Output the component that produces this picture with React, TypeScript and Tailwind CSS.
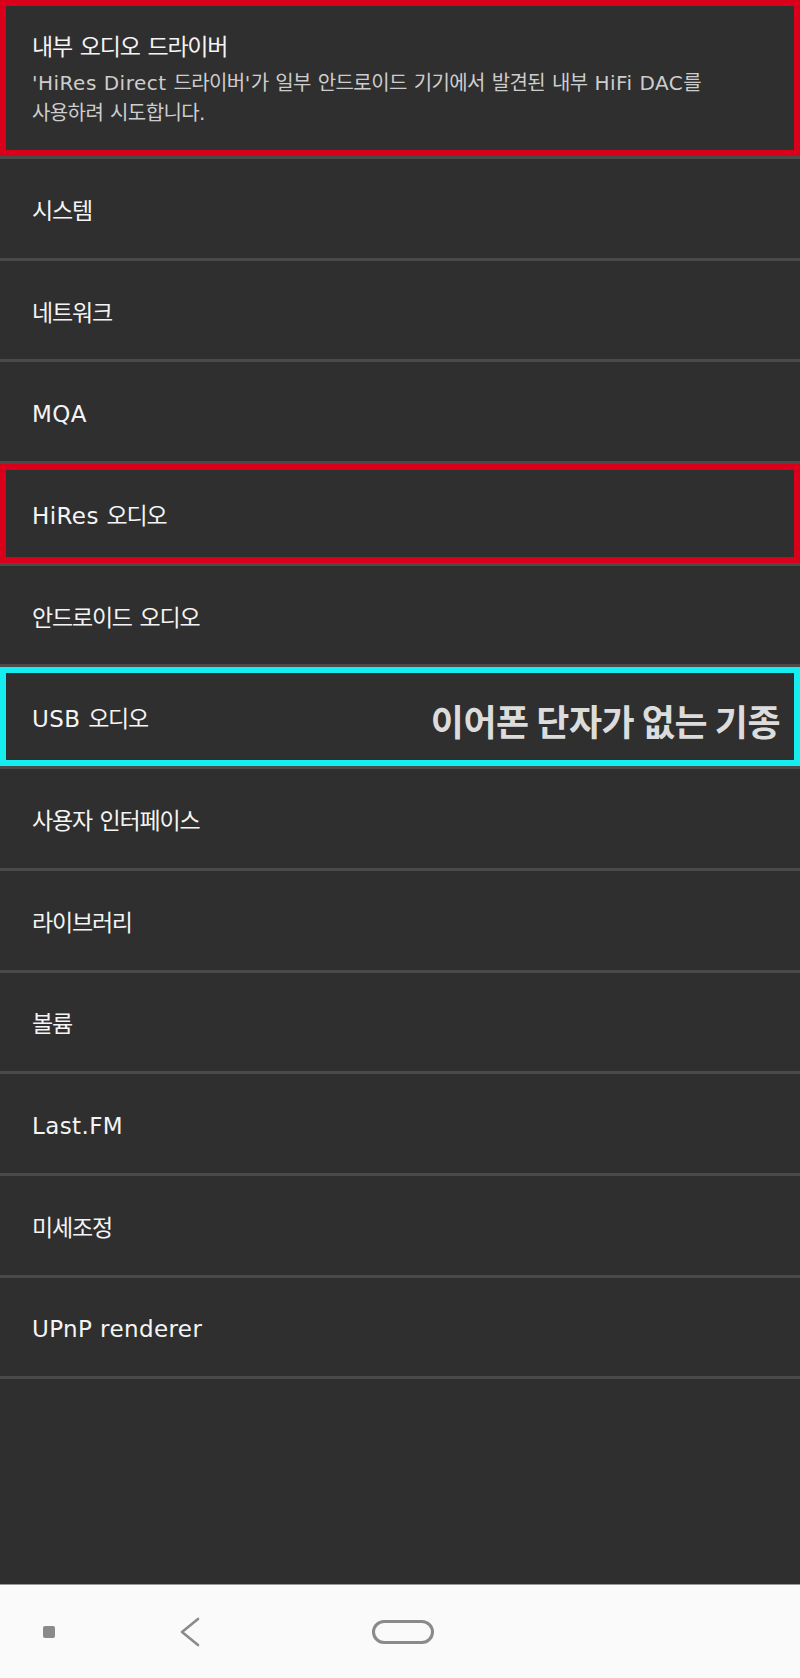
import type { ReactNode } from 'react';

const FONT = "font-['DejaVu_Sans','Noto_Sans_CJK_KR',sans-serif]";

type Row = { label: string; highlight?: 'red' | 'cyan'; note?: string };

const ROWS: Row[] = [
  { label: '시스템' },
  { label: '네트워크' },
  { label: 'MQA' },
  { label: 'HiRes 오디오', highlight: 'red' },
  { label: '안드로이드 오디오' },
  { label: 'USB 오디오', highlight: 'cyan', note: '이어폰 단자가 없는 기종' },
  { label: '사용자 인터페이스' },
  { label: '라이브러리' },
  { label: '볼륨' },
  { label: 'Last.FM' },
  { label: '미세조정' },
  { label: 'UPnP renderer' },
];

function Mixed({ text, ko, lat }: { text: string; ko: string; lat: string }) {
  const parts = text.split(/([가-힣]+)/).filter(Boolean);
  return (
    <>
      {parts.map((p, i) => (
        <span key={i} className={/[가-힣]/.test(p) ? ko : lat}>
          {p}
        </span>
      ))}
    </>
  );
}

function RowBody({ row }: { row: Row }): ReactNode {
  const frame =
    row.highlight === 'red'
      ? 'border-[6px] border-[#d9001b] pl-[26px]'
      : row.highlight === 'cyan'
        ? 'border-[6px] border-[#14eef0] pl-[26px] pr-[14px]'
        : 'pl-8';

  return (
    <div className={`h-full flex items-center justify-between pt-[6px] ${frame}`}>
      <span className="text-[23px] leading-none text-[#f4f4f4] whitespace-nowrap">
        <Mixed text={row.label} ko="tracking-[-1.2px]" lat="tracking-[0.4px]" />
      </span>
      {row.note && (
        <span className="font-['Noto_Sans_CJK_KR',sans-serif] text-[36px] font-bold leading-none tracking-[-0.5px] text-[#dcdcdc]">
          {row.note}
        </span>
      )}
    </div>
  );
}

export default function App() {
  return (
    <div className={`w-[800px] h-[1678px] flex flex-col bg-[#2f2f2f] ${FONT}`}>
      <div className="h-[156px] shrink-0 border-[6px] border-[#d9001b] pl-[26px] pt-[26px]">
        <div className="text-[23px] leading-[30px] text-[#f4f4f4]">
          <Mixed text="내부 오디오 드라이버" ko="tracking-[-1.2px]" lat="tracking-[0.5px]" />
        </div>
        <div className="mt-[6px] text-[20px] leading-[30px] text-[#cdcdcd] whitespace-nowrap">
          <Mixed
            text="'HiRes Direct 드라이버'가 일부 안드로이드 기기에서 발견된 내부 HiFi DAC를"
            ko="tracking-[-0.6px]"
            lat="tracking-[0.5px]"
          />
          <br />
          <Mixed text="사용하려 시도합니다." ko="tracking-[-0.6px]" lat="tracking-[0.5px]" />
        </div>
      </div>

      <div className="flex flex-col border-b-[3px] border-[#4a4a4a]">
        {ROWS.map((row) => (
          <div
            key={row.label}
            className="h-[101.7px] border-t-[3px] border-[#4a4a4a]"
          >
            <RowBody row={row} />
          </div>
        ))}
      </div>

      <div className="flex-1" />

      <nav className="h-[94px] shrink-0 bg-[#fafafa] border-t border-[#9a9a9a] flex items-center">
        <div className="ml-[43px] w-3 h-3 rounded-[2px] bg-[#8a8a8a]" />
        <svg
          className="ml-[124px]"
          width="22"
          height="30"
          viewBox="0 0 22 30"
          fill="none"
          stroke="#8a8a8a"
          strokeWidth="2.6"
          strokeLinecap="round"
          strokeLinejoin="round"
        >
          <polyline points="19,2 3,15 19,28" />
        </svg>
        <div className="ml-[171px] w-[62px] h-[24px] rounded-full border-[3px] border-[#8a8a8a]" />
      </nav>
    </div>
  );
}
